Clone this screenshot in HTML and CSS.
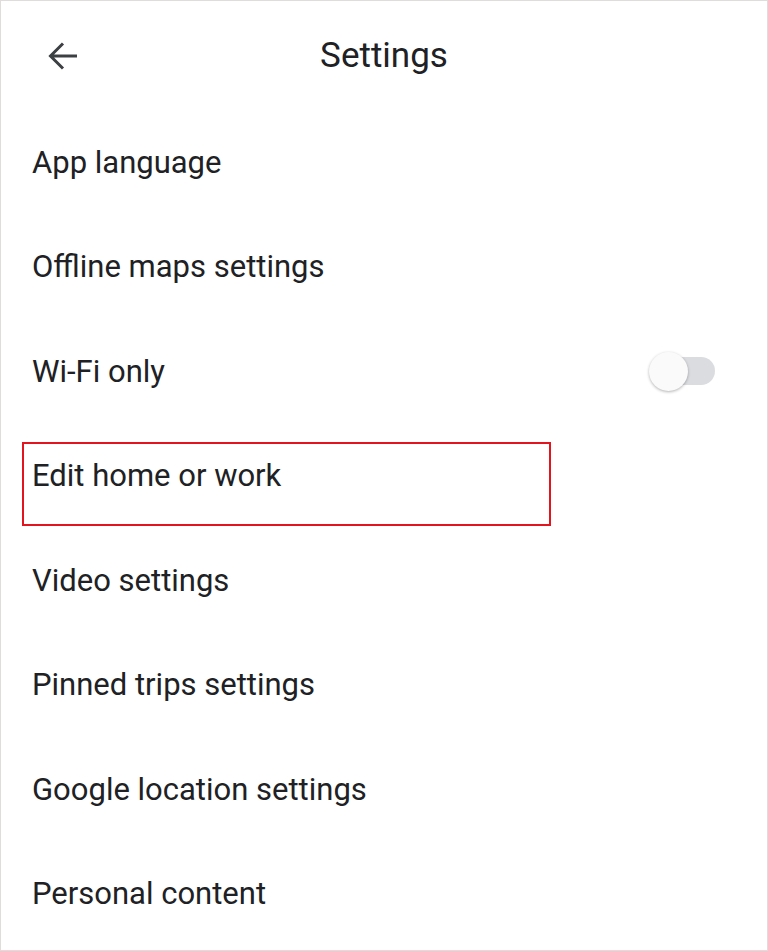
FILE: index.html
```html
<!DOCTYPE html>
<html>
<head>
<meta charset="UTF-8">
<title>Settings</title>
<link rel="stylesheet" href="styles.css">
</head>
<body>
<div class="screen">
	<div class="header">
		<button class="back" type="button">
			<svg width="32" height="32" viewBox="0 0 32 32"><path d="M30 16H4M16 3.5L3.5 16L16 28.5" fill="none" stroke="#3c4043" stroke-width="3"/></svg>
		</button>
		<div class="title">Settings</div>
	</div>
	<div class="list">
		<div class="row">App language</div>
		<div class="row">Offline maps settings</div>
		<div class="row">
			<span>Wi-Fi only</span>
			<span class="toggle"><span class="knob"></span></span>
		</div>
		<div class="row marked">
			<span>Edit home or work</span>
			<span class="mark"></span>
		</div>
		<div class="row">Video settings</div>
		<div class="row">Pinned trips settings</div>
		<div class="row">Google location settings</div>
		<div class="row">Personal content</div>
	</div>
</div>
</body>
</html>
```
FILE: styles.css
```css
* {
	font-family: Roboto, "Noto Sans", Arial, sans-serif;
	box-sizing: border-box;
}

body {
	margin: 0;
	background-color: #FFF;
}

.screen {
	width: 768px;
	height: 951px;
	border: 1px solid #e0dcdc;
	overflow: hidden;
	color: #202124;
}

.header {
	height: 109px;
	display: flex;
	align-items: center;
	position: relative;
}
.header .back {
	margin-left: 46px;
	padding: 0;
	border-style: none;
	background: none;
	display: flex;
	z-index: 1;
}
.header .title {
	position: absolute;
	left: 0;
	right: 0;
	text-align: center;
	font-size: 35px;
	color: #202124;
}

.list .row {
	height: 104.5px;
	display: flex;
	align-items: center;
	justify-content: space-between;
	padding: 0 52px 0 31px;
	font-size: 31px;
	position: relative;
}

.toggle {
	width: 62px;
	height: 28px;
	border-radius: 14px;
	background-color: #dadce0;
	display: flex;
	align-items: center;
	position: relative;
}
.toggle .knob {
	width: 39px;
	height: 39px;
	border-radius: 50%;
	background-color: #fafafa;
	box-shadow: 0 1px 3px rgba(0,0,0,0.3);
	margin-left: -4px;
}

.row .mark {
	position: absolute;
	left: 21px;
	top: 18px;
	width: 529px;
	height: 84px;
	border: 2px solid #e3141e;
}
```
